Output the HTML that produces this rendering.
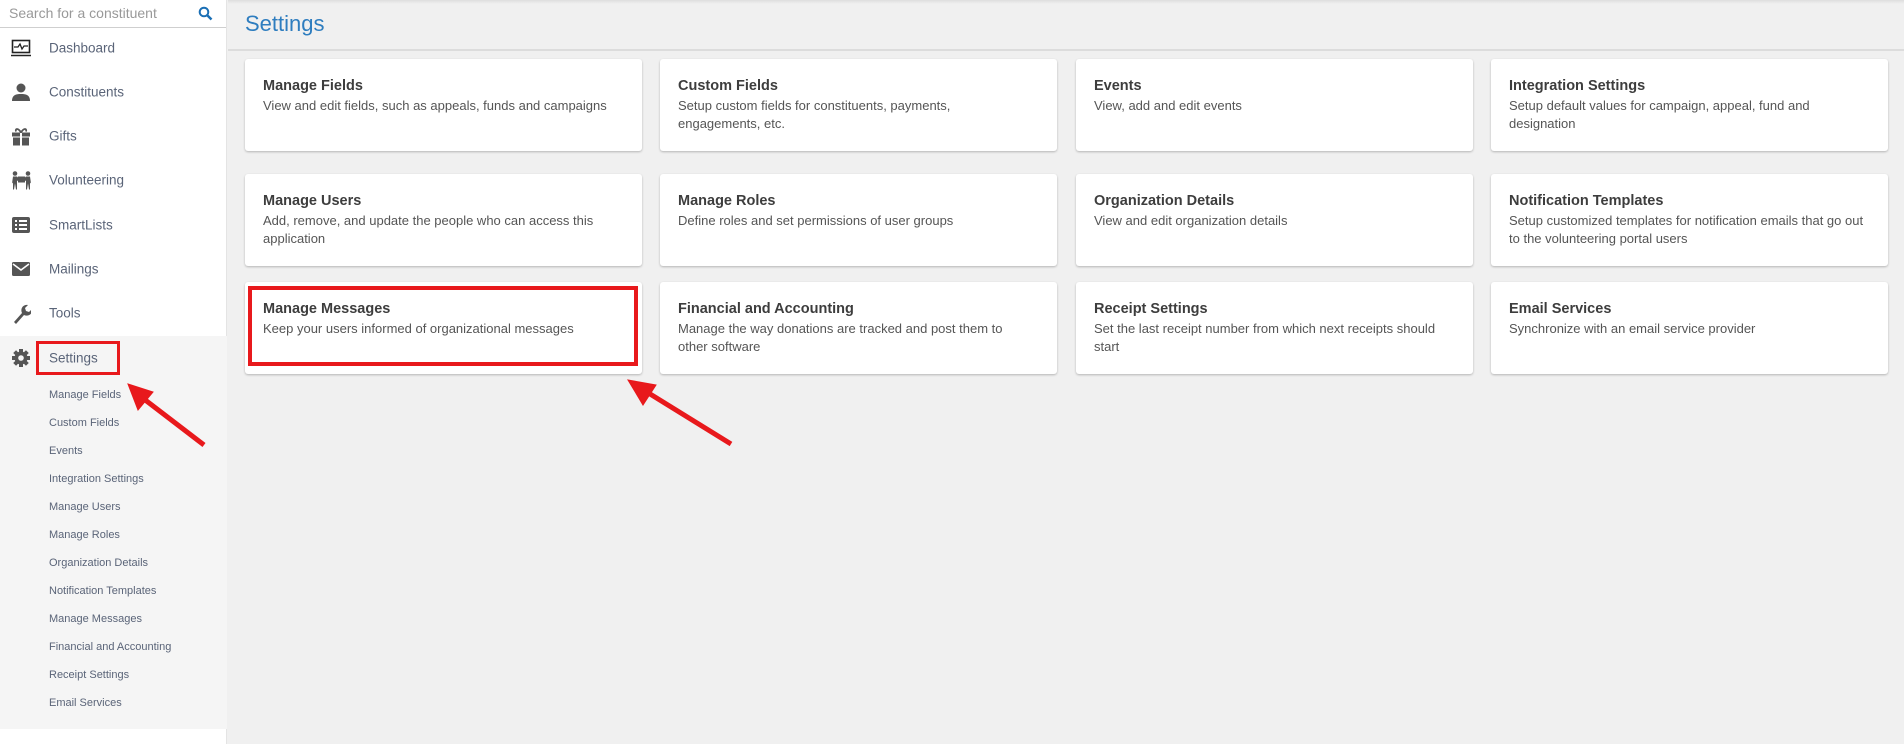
<!DOCTYPE html>
<html><head><meta charset="utf-8">
<style>
*{box-sizing:border-box;margin:0;padding:0}
body{width:1904px;height:744px;overflow:hidden;background:#f0f0f0;font-family:"Liberation Sans",sans-serif;position:relative}
#side{position:absolute;left:0;top:0;width:227px;height:744px;background:#fff;border-right:1px solid #e4e4e4}
#search{height:28px;border-bottom:1px solid #cfcfcf;position:relative}
#search span{position:absolute;left:9px;top:5px;font-size:14px;color:#999}
.nav{position:absolute;left:0;width:227px;height:44px}
.nav .t{position:absolute;left:49px;top:50%;transform:translateY(-50%);font-size:13.5px;color:#5a6478}
.nav svg{position:absolute;left:11px;top:50%;transform:translateY(-50%)}
#setbg{position:absolute;left:0;top:336px;width:227px;height:393px;background:#f5f5f5}
.sub{position:absolute;left:49px;font-size:11px;color:#5a6478}
#main-title{position:absolute;left:245px;top:11px;font-size:22px;color:#2e7dbf}
#hline{position:absolute;left:228px;top:49px;width:1676px;height:2px;background:#dcdcdc}
#topsh{position:absolute;left:228px;top:0;width:1676px;height:4px;background:linear-gradient(#dedede,#f0f0f0)}
.card{position:absolute;width:397px;height:92px;background:#fff;border-radius:3px;box-shadow:0 1px 2px rgba(0,0,0,.25);padding:17px 18px 0 18px}
.card h3{font-size:14.5px;font-weight:bold;color:#3d3d3d;line-height:20px}
.card p{font-size:13px;color:#555;line-height:18px;margin-top:1px;width:358px}
.rb{position:absolute;border:3px solid #e8191c}
</style></head><body>
<div id="side">
<div id="search"><span>Search for a constituent</span>
<svg style="position:absolute;left:198px;top:6px" width="15" height="15" viewBox="0 0 15 15"><circle cx="6" cy="6" r="4.3" fill="none" stroke="#1a6fb5" stroke-width="2"/><path d="M9 9l4.5 4.5" stroke="#1a6fb5" stroke-width="2.5"/></svg></div>
<div id="setbg"></div>
<div class="nav" style="top:26px"><svg width="20" height="18" viewBox="0 0 20 18"><rect x="1.5" y="1.5" width="17" height="12" fill="none" stroke="#222" stroke-width="1.6"/><path d="M3 8h4l2-3 2 5 2-3h4" fill="none" stroke="#222" stroke-width="1.3"/><path d="M0 16.5h20" stroke="#222" stroke-width="1.5"/></svg><span class="t">Dashboard</span></div>
<div class="nav" style="top:70px"><svg width="20" height="20" viewBox="0 0 20 20"><circle cx="10" cy="6" r="4.5" fill="#555"/><path d="M1 19c0-6 4-7 9-7s9 1 9 7z" fill="#555"/></svg><span class="t">Constituents</span></div>
<div class="nav" style="top:114px"><svg width="20" height="19" viewBox="0 0 20 19"><rect x="1" y="6" width="18" height="4" fill="#555"/><rect x="2" y="11" width="16" height="8" fill="#555"/><rect x="9" y="6" width="2" height="13" fill="#fff"/><path d="M10 6C7 1 4 2 5 5M10 6c3-5 6-4 5-1" fill="none" stroke="#555" stroke-width="1.8"/></svg><span class="t">Gifts</span></div>
<div class="nav" style="top:158px"><svg width="21" height="19" viewBox="0 0 21 19"><circle cx="4" cy="3" r="2.3" fill="#555"/><circle cx="17" cy="3" r="2.3" fill="#555"/><rect x="7" y="6" width="7" height="6" fill="#555"/><path d="M2 6h4l2 2v3L6 10v9H5l-1-6-1 6H2V12L1 13z M19 6h-4l-2 2v3l2-1v9h1l1-6 1 6h1V12l1 1z" fill="#555"/></svg><span class="t">Volunteering</span></div>
<div class="nav" style="top:203px"><svg width="20" height="18" viewBox="0 0 20 18"><rect x="1" y="1" width="18" height="16" rx="2" fill="#555"/><g fill="#fff"><rect x="4" y="4" width="2" height="2"/><rect x="4" y="8" width="2" height="2"/><rect x="4" y="12" width="2" height="2"/><rect x="8" y="4" width="8" height="2"/><rect x="8" y="8" width="8" height="2"/><rect x="8" y="12" width="8" height="2"/></g></svg><span class="t">SmartLists</span></div>
<div class="nav" style="top:247px"><svg width="20" height="16" viewBox="0 0 20 16"><rect x="1" y="1" width="18" height="14" rx="1.5" fill="#555"/><path d="M2 3l8 6 8-6" fill="none" stroke="#fff" stroke-width="1.6"/></svg><span class="t">Mailings</span></div>
<div class="nav" style="top:291px"><svg width="20" height="22" viewBox="0 0 20 22"><path d="M3 20l8-9c-2-4 1-9 6-8l-3 3 1 3 3 1 3-3c1 5-4 8-8 6l-8 9z" fill="#555"/></svg><span class="t">Tools</span></div>
<div class="nav" style="top:336px"><svg width="20" height="20" viewBox="0 0 20 20"><g fill="#555"><circle cx="10" cy="10" r="6.5"/><rect x="8" y="1" width="4" height="18"/><rect x="1" y="8" width="18" height="4"/><rect x="8" y="1" width="4" height="18" transform="rotate(45 10 10)"/><rect x="8" y="1" width="4" height="18" transform="rotate(-45 10 10)"/></g><circle cx="10" cy="10" r="2.8" fill="#f5f5f5"/></svg><span class="t">Settings</span></div>
<div class="sub" style="top:389px">Manage Fields</div>
<div class="sub" style="top:417px">Custom Fields</div>
<div class="sub" style="top:445px">Events</div>
<div class="sub" style="top:473px">Integration Settings</div>
<div class="sub" style="top:501px">Manage Users</div>
<div class="sub" style="top:529px">Manage Roles</div>
<div class="sub" style="top:557px">Organization Details</div>
<div class="sub" style="top:585px">Notification Templates</div>
<div class="sub" style="top:613px">Manage Messages</div>
<div class="sub" style="top:641px">Financial and Accounting</div>
<div class="sub" style="top:669px">Receipt Settings</div>
<div class="sub" style="top:697px">Email Services</div>
</div>
<div id="topsh"></div>
<div id="main-title">Settings</div>
<div id="hline"></div>

<div class="card" style="left:245px;top:59px"><h3>Manage Fields</h3><p>View and edit fields, such as appeals, funds and campaigns</p></div>
<div class="card" style="left:660px;top:59px"><h3>Custom Fields</h3><p>Setup custom fields for constituents, payments, engagements, etc.</p></div>
<div class="card" style="left:1076px;top:59px"><h3>Events</h3><p>View, add and edit events</p></div>
<div class="card" style="left:1491px;top:59px"><h3>Integration Settings</h3><p>Setup default values for campaign, appeal, fund and designation</p></div>

<div class="card" style="left:245px;top:174px"><h3>Manage Users</h3><p>Add, remove, and update the people who can access this application</p></div>
<div class="card" style="left:660px;top:174px"><h3>Manage Roles</h3><p>Define roles and set permissions of user groups</p></div>
<div class="card" style="left:1076px;top:174px"><h3>Organization Details</h3><p>View and edit organization details</p></div>
<div class="card" style="left:1491px;top:174px"><h3>Notification Templates</h3><p>Setup customized templates for notification emails that go out to the volunteering portal users</p></div>

<div class="card" style="left:245px;top:282px"><h3>Manage Messages</h3><p>Keep your users informed of organizational messages</p></div>
<div class="card" style="left:660px;top:282px"><h3>Financial and Accounting</h3><p>Manage the way donations are tracked and post them to<br>other software</p></div>
<div class="card" style="left:1076px;top:282px"><h3>Receipt Settings</h3><p>Set the last receipt number from which next receipts should start</p></div>
<div class="card" style="left:1491px;top:282px"><h3>Email Services</h3><p>Synchronize with an email service provider</p></div>

<div class="rb" style="left:36px;top:341px;width:84px;height:34px"></div>
<div class="rb" style="left:248px;top:286px;width:390px;height:80px;border-width:4px"></div>

<svg style="position:absolute;left:0;top:0" width="1904" height="744">
<g fill="#e8191c" stroke="#e8191c">
<line x1="204" y1="445" x2="140" y2="396" stroke-width="5"/>
<polygon points="128,384 153,392 138,410" stroke-width="1"/>
<line x1="731" y1="444" x2="642" y2="389" stroke-width="5"/>
<polygon points="628,380 656,385 643,405" stroke-width="1"/>
</g></svg>
</body></html>
